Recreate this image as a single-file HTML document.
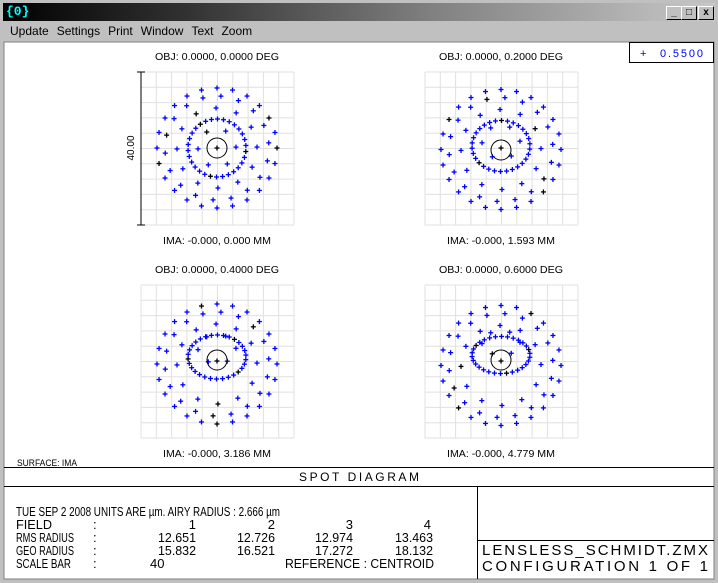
<!DOCTYPE html>
<html><head><meta charset="utf-8"><style>
body{margin:0;width:718px;height:583px;overflow:hidden;background:#c0c0c0;font-family:"Liberation Sans",sans-serif}
#title{position:absolute;left:3px;top:3px;width:712px;height:18px;background:linear-gradient(90deg,#000 0%,#303030 25%,#808080 60%,#c8c8c8 100%)}
.btn{position:absolute;top:3px;width:14px;height:12px;background:#c0c0c0;border:1px solid;border-color:#fff #000 #000 #fff;font-size:10px;line-height:12px;text-align:center;font-weight:bold}
#menu{position:absolute;left:10px;top:24px;font-size:12px;color:#000}
#menu span{margin-right:8px}
svg{position:absolute;left:0;top:0}
</style></head><body>
<div id="title"><span style="position:absolute;left:3px;top:1px;color:#0ff;font:bold 13px 'Liberation Mono',monospace">{0}</span>
<div class="btn" style="left:663px">_</div><div class="btn" style="left:678px">□</div><div class="btn" style="left:695px">x</div></div>
<div id="menu"><span>Update</span><span>Settings</span><span>Print</span><span>Window</span><span>Text</span><span>Zoom</span></div>
<svg id="s" width="718" height="583" xmlns="http://www.w3.org/2000/svg" font-family="Liberation Sans, sans-serif">
<rect x="4" y="42" width="710" height="537" fill="#fff" stroke="#808080"/>
<g id="grids" stroke="#e0e0e0" stroke-width="1"></g>
<g id="pts" stroke-width="1.3"></g>
<g fill="#000" font-size="10">
<text x="217" y="60" text-anchor="middle" textLength="124" lengthAdjust="spacingAndGlyphs">OBJ: 0.0000, 0.0000 DEG</text>
<text x="501" y="60" text-anchor="middle" textLength="124" lengthAdjust="spacingAndGlyphs">OBJ: 0.0000, 0.2000 DEG</text>
<text x="217" y="273" text-anchor="middle" textLength="124" lengthAdjust="spacingAndGlyphs">OBJ: 0.0000, 0.4000 DEG</text>
<text x="501" y="273" text-anchor="middle" textLength="124" lengthAdjust="spacingAndGlyphs">OBJ: 0.0000, 0.6000 DEG</text>
<text x="217" y="244" text-anchor="middle" textLength="108" lengthAdjust="spacingAndGlyphs">IMA: -0.000, 0.000 MM</text>
<text x="501" y="244" text-anchor="middle" textLength="108" lengthAdjust="spacingAndGlyphs">IMA: -0.000, 1.593 MM</text>
<text x="217" y="457" text-anchor="middle" textLength="108" lengthAdjust="spacingAndGlyphs">IMA: -0.000, 3.186 MM</text>
<text x="501" y="457" text-anchor="middle" textLength="108" lengthAdjust="spacingAndGlyphs">IMA: -0.000, 4.779 MM</text>
<text x="17" y="466" font-size="9" textLength="60" lengthAdjust="spacingAndGlyphs">SURFACE: IMA</text>
<text x="134" y="148" font-size="10" text-anchor="middle" transform="rotate(-90 134 148)">40.00</text>
</g>
<g stroke="#000" fill="none">
<line x1="141" y1="72" x2="141" y2="225"/><line x1="137" y1="72" x2="145" y2="72"/><line x1="137" y1="225" x2="145" y2="225"/>
<circle cx="217" cy="148" r="10"/><circle cx="501" cy="150" r="10"/><circle cx="217" cy="360" r="10"/><circle cx="501" cy="360" r="10"/>
<line x1="4" y1="467.5" x2="714" y2="467.5"/><line x1="4" y1="486.5" x2="714" y2="486.5"/>
<line x1="477.5" y1="486" x2="477.5" y2="579"/><line x1="477" y1="540.5" x2="714" y2="540.5"/>
<rect x="629.5" y="42.5" width="84" height="20"/>
</g>
<text x="640" y="57" fill="#00f" font-size="11">+</text><text x="660" y="57" fill="#00f" font-size="11" textLength="43">0.5500</text>
<text x="359" y="481" text-anchor="middle" font-size="12" textLength="120">SPOT DIAGRAM</text>
<g font-size="13">
<text x="16" y="516" textLength="264" lengthAdjust="spacingAndGlyphs">TUE SEP 2 2008  UNITS ARE µm.  AIRY RADIUS : 2.666 µm</text>
<text x="16" y="529" textLength="36" lengthAdjust="spacingAndGlyphs">FIELD</text><text x="16" y="542" textLength="58" lengthAdjust="spacingAndGlyphs">RMS RADIUS</text><text x="16" y="555" textLength="58" lengthAdjust="spacingAndGlyphs">GEO RADIUS</text><text x="16" y="568" textLength="55" lengthAdjust="spacingAndGlyphs">SCALE BAR</text>
<text x="93" y="529">:</text><text x="93" y="542">:</text><text x="93" y="555">:</text><text x="93" y="568">:</text>
<g text-anchor="end">
<text x="196" y="529">1</text><text x="275" y="529">2</text><text x="353" y="529">3</text><text x="431" y="529">4</text>
<text x="196" y="542" textLength="38" lengthAdjust="spacingAndGlyphs">12.651</text><text x="275" y="542" textLength="38" lengthAdjust="spacingAndGlyphs">12.726</text><text x="353" y="542" textLength="38" lengthAdjust="spacingAndGlyphs">12.974</text><text x="433" y="542" textLength="38" lengthAdjust="spacingAndGlyphs">13.463</text>
<text x="196" y="555" textLength="38" lengthAdjust="spacingAndGlyphs">15.832</text><text x="275" y="555" textLength="38" lengthAdjust="spacingAndGlyphs">16.521</text><text x="353" y="555" textLength="38" lengthAdjust="spacingAndGlyphs">17.272</text><text x="433" y="555" textLength="38" lengthAdjust="spacingAndGlyphs">18.132</text>
</g>
<text x="150" y="568">40</text><text x="285" y="568" textLength="149" lengthAdjust="spacingAndGlyphs">REFERENCE  : CENTROID</text>
</g>
<g font-size="15"><text x="482" y="555" textLength="226">LENSLESS_SCHMIDT.ZMX</text><text x="482" y="571" textLength="226">CONFIGURATION 1 OF 1</text></g>
</svg>
<script>
var NS="http://www.w3.org/2000/svg",g=document.getElementById('grids'),p=document.getElementById('pts');
function L(x1,y1,x2,y2,par,c){var l=document.createElementNS(NS,'line');l.setAttribute('x1',x1);l.setAttribute('y1',y1);l.setAttribute('x2',x2);l.setAttribute('y2',y2);if(c)l.setAttribute('stroke',c);par.appendChild(l);}
var C=[[217,148],[501,148],[217,361],[501,361]];
C.forEach(function(c,k){var x0=c[0]-76,y0=c[1]-76,s=15.3;
for(var i=0;i<=10;i++){L(x0+i*s,y0,x0+i*s,y0+153,g);L(x0,y0+i*s,x0+153,y0+i*s,g);}
var rings=[[60,24],[52,18],[40,12],[29,30],[19,6]];
rings.forEach(function(r,j){var n=r[1];for(var i=0;i<n;i++){var a=2*Math.PI*i/n+j*0.25;
var rx=r[0],ry=r[0],dy=0;
if(k>0&&j>=3){ry=r[0]*(1-0.12*k);dy=-k*6+(j==3?k*4:0);}
if(k>0&&j<3){dy=k*1.5;}
var x=c[0]+rx*Math.cos(a),y=c[1]+dy+ry*Math.sin(a);
var col=((i*7+j*3+k)%11==0)?'#000':'#00f';
L(x-2.5,y,x+2.5,y,p,col);L(x,y-2.5,x,y+2.5,p,col);}});
L(c[0]-2.5,c[1],c[0]+2.5,c[1],p,'#000');L(c[0],c[1]-2.5,c[0],c[1]+2.5,p,'#000');});
</script>
</body></html>
